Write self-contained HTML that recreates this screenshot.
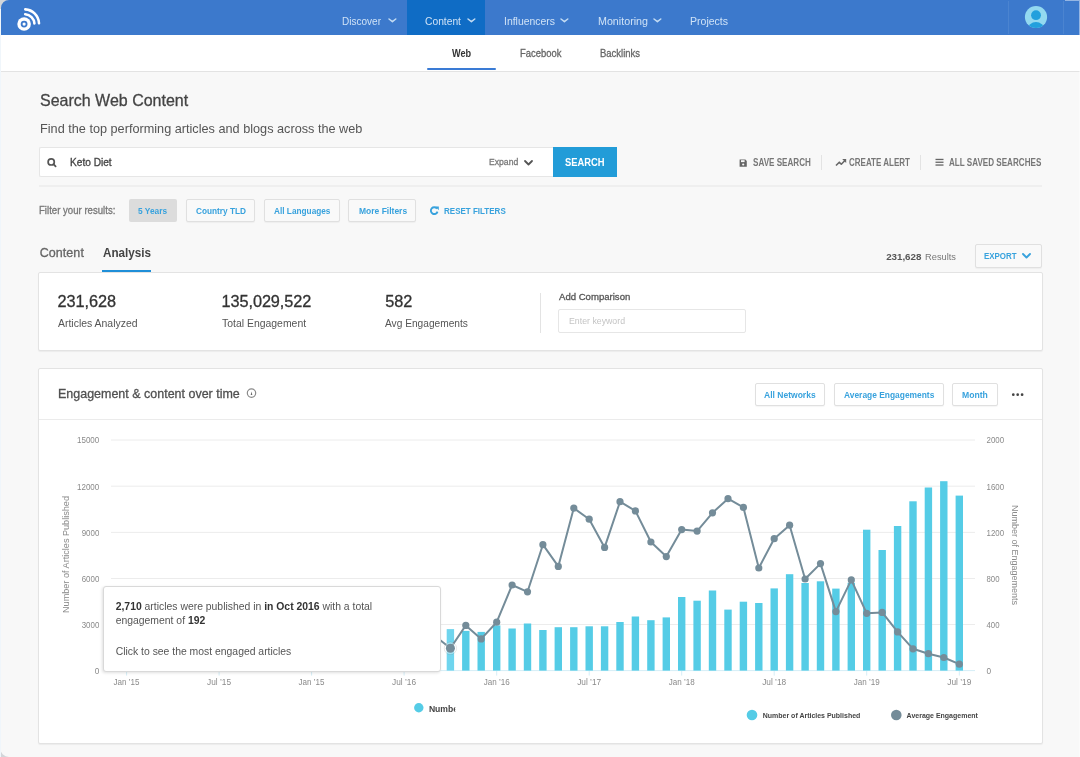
<!DOCTYPE html>
<html><head><meta charset="utf-8"><style>
body{will-change:transform}
html,body{margin:0;padding:0;width:1080px;height:757px;overflow:hidden;background:#f8f8f8;font-family:"Liberation Sans",sans-serif}
.t{position:absolute;line-height:1;white-space:nowrap}
.t b{color:#333}
.b{position:absolute}
.ic{position:absolute;overflow:visible}
.ax{font-family:"Liberation Sans",sans-serif;font-size:8px;fill:#8a8a8a}
.at{font-family:"Liberation Sans",sans-serif;font-size:9px;fill:#8a8a8a}
.lg{font-family:"Liberation Sans",sans-serif;font-weight:bold;fill:#444}
</style></head><body>
<div class="b" style="left:0px;top:0px;width:1080.0px;height:35.0px;background:#3c79cc"></div>
<div class="b" style="left:407px;top:0px;width:78.0px;height:35.0px;background:#0f6cc5"></div>
<div class="t " style="left:342.00px;top:16px;font-size:11px;color:#cfe2f6;transform:scaleX(0.9114);transform-origin:0 0">Discover</div>
<div class="t " style="left:425.00px;top:16px;font-size:11px;color:#cfe2f6;transform:scaleX(0.9337);transform-origin:0 0">Content</div>
<div class="t " style="left:504.00px;top:16px;font-size:11px;color:#cfe2f6;transform:scaleX(0.9481);transform-origin:0 0">Influencers</div>
<div class="t " style="left:597.50px;top:16px;font-size:11px;color:#cfe2f6;transform:scaleX(0.9733);transform-origin:0 0">Monitoring</div>
<div class="t " style="left:690.00px;top:16px;font-size:11px;color:#cfe2f6;transform:scaleX(0.9569);transform-origin:0 0">Projects</div>
<svg class="ic" style="left:387.2px;top:17.2px" width="10.8" height="6.7" viewBox="-2 -2 10.8 6.7"><polyline points="0,0 3.40,2.70 6.80,0" fill="none" stroke="#c3dcf3" stroke-width="1.5" stroke-linecap="round" stroke-linejoin="round"/></svg>
<svg class="ic" style="left:465.7px;top:17.2px" width="10.8" height="6.7" viewBox="-2 -2 10.8 6.7"><polyline points="0,0 3.40,2.70 6.80,0" fill="none" stroke="#c3dcf3" stroke-width="1.5" stroke-linecap="round" stroke-linejoin="round"/></svg>
<svg class="ic" style="left:559.2px;top:17.2px" width="10.8" height="6.7" viewBox="-2 -2 10.8 6.7"><polyline points="0,0 3.40,2.70 6.80,0" fill="none" stroke="#c3dcf3" stroke-width="1.5" stroke-linecap="round" stroke-linejoin="round"/></svg>
<svg class="ic" style="left:652.2px;top:17.2px" width="10.8" height="6.7" viewBox="-2 -2 10.8 6.7"><polyline points="0,0 3.40,2.70 6.80,0" fill="none" stroke="#c3dcf3" stroke-width="1.5" stroke-linecap="round" stroke-linejoin="round"/></svg>
<div class="b" style="left:1008.2px;top:1px;width:1.0px;height:33.0px;background:#4b84d0"></div>
<div class="b" style="left:1062.5px;top:1px;width:1.0px;height:33.0px;background:#4b84d0"></div>
<svg class="ic" style="left:1024px;top:5px" width="24" height="24" viewBox="0 0 24 24"><defs><clipPath id="av"><circle cx="12" cy="12" r="11.1"/></clipPath></defs><circle cx="12" cy="12" r="11.1" fill="#93d9f0"/><g clip-path="url(#av)"><circle cx="12" cy="10.2" r="4.9" fill="#22a0dd"/><ellipse cx="12" cy="24.5" rx="8.2" ry="7.5" fill="#22a0dd"/></g></svg>
<svg class="ic" style="left:10px;top:6px" width="28" height="28" viewBox="10 6 28 28"><circle cx="24.1" cy="24.05" r="6.8" fill="#fff"/><circle cx="24.1" cy="24.05" r="2.5" fill="#fff" stroke="#3c79cc" stroke-width="1.8"/><path d="M25.2 14.2 A9.9 9.9 0 0 1 34.4 23.4" fill="none" stroke="#fff" stroke-width="2.6" stroke-linecap="round"/><path d="M25.3 9.4 A14.6 14.6 0 0 1 39.0 23.2" fill="none" stroke="#fff" stroke-width="2.6" stroke-linecap="round"/></svg>
<div class="b" style="left:0px;top:35px;width:1080.0px;height:36.0px;background:#fff"></div>
<div class="b" style="left:0px;top:71px;width:1080.0px;height:1.0px;background:#e3e3e3"></div>
<div class="t " style="left:451.80px;top:48px;font-size:10.6px;color:#333;font-weight:bold;transform:scaleX(0.8646);transform-origin:0 0">Web</div>
<div class="t " style="left:519.60px;top:48px;font-size:10.6px;color:#666;-webkit-text-stroke:0.3px currentColor;transform:scaleX(0.8894);transform-origin:0 0">Facebook</div>
<div class="t " style="left:599.60px;top:48px;font-size:10.6px;color:#666;-webkit-text-stroke:0.3px currentColor;transform:scaleX(0.8961);transform-origin:0 0">Backlinks</div>
<div class="b" style="left:427px;top:67.5px;width:69.0px;height:2.8px;background:#3a7bd5;border-radius:1px"></div>
<div class="t " style="left:39.80px;top:93px;font-size:16.6px;color:#444;-webkit-text-stroke:0.3px currentColor;transform:scaleX(0.9637);transform-origin:0 0">Search Web Content</div>
<div class="t " style="left:39.80px;top:123px;font-size:12.2px;color:#555;transform:scaleX(1.0412);transform-origin:0 0">Find the top performing articles and blogs across the web</div>
<div class="b" style="left:39px;top:147px;width:514.0px;height:30.0px;background:#fff;border:1px solid #e6e6e6;border-right:none;box-sizing:border-box;border-radius:2px 0 0 2px"></div>
<svg class="ic" style="left:46px;top:156.5px" width="12" height="12" viewBox="0 0 12 12"><circle cx="5.2" cy="4.9" r="3.1" fill="none" stroke="#555" stroke-width="1.7"/><line x1="7.5" y1="7.2" x2="9.6" y2="9.3" stroke="#555" stroke-width="1.8" stroke-linecap="round"/></svg>
<div class="t " style="left:70.00px;top:158px;font-size:10.4px;color:#444;-webkit-text-stroke:0.3px currentColor;transform:scaleX(0.9746);transform-origin:0 0">Keto Diet</div>
<div class="t " style="left:489.40px;top:157px;font-size:9.8px;color:#777;-webkit-text-stroke:0.3px currentColor;transform:scaleX(0.8800);transform-origin:0 0">Expand</div>
<svg class="ic" style="left:522.6px;top:158.6px" width="11.0" height="7.5" viewBox="-2 -2 11.0 7.5"><polyline points="0,0 3.50,3.50 7.00,0" fill="none" stroke="#555" stroke-width="1.8" stroke-linecap="round" stroke-linejoin="round"/></svg>
<div class="b" style="left:552.5px;top:147px;width:64.5px;height:30.0px;background:#229cd8"></div>
<div class="t " style="left:565.00px;top:157px;font-size:10.8px;color:#fff;font-weight:bold;transform:scaleX(0.8679);transform-origin:0 0">SEARCH</div>
<svg class="ic" style="left:739px;top:158.6px" width="8.4" height="8.4" viewBox="0 0 8.4 8.4"><path d="M0.6 0.6 H6.4 L7.8 2 V7.8 H0.6 Z" fill="#666"/><rect x="2" y="1.2" width="3.6" height="1.9" fill="#f8f8f8"/><circle cx="4.2" cy="5.5" r="1.1" fill="#f8f8f8"/></svg>
<div class="t " style="left:753.10px;top:158px;font-size:10.2px;color:#777;font-weight:bold;transform:scaleX(0.7953);transform-origin:0 0">SAVE SEARCH</div>
<div class="b" style="left:821px;top:155px;width:1.0px;height:14.5px;background:#e3e3e3"></div>
<svg class="ic" style="left:834.5px;top:156.7px" width="12" height="10" viewBox="0 0 12 10"><polyline points="1,8.5 4.3,5.2 6.3,7.2 10.2,3.2" fill="none" stroke="#666" stroke-width="1.6" stroke-linejoin="round"/><polygon points="7.2,2 11.2,2 11.2,6" fill="#666"/></svg>
<div class="t " style="left:849.30px;top:158px;font-size:10.2px;color:#777;font-weight:bold;transform:scaleX(0.7859);transform-origin:0 0">CREATE ALERT</div>
<div class="b" style="left:920.3px;top:155px;width:1.0px;height:14.5px;background:#e3e3e3"></div>
<svg class="ic" style="left:934.5px;top:158px" width="9" height="9" viewBox="0 0 9 9"><rect x="0.5" y="0.8" width="8" height="1.3" fill="#666"/><rect x="0.5" y="3.6" width="8" height="1.3" fill="#666"/><rect x="0.5" y="6.4" width="8" height="1.3" fill="#666"/></svg>
<div class="t " style="left:948.50px;top:158px;font-size:10.2px;color:#777;font-weight:bold;transform:scaleX(0.7939);transform-origin:0 0">ALL SAVED SEARCHES</div>
<div class="b" style="left:39px;top:185px;width:1003.0px;height:2.0px;background:#efefef"></div>
<div class="t " style="left:39.30px;top:206px;font-size:10.4px;color:#777;-webkit-text-stroke:0.3px currentColor;transform:scaleX(0.9249);transform-origin:0 0">Filter your results:</div>
<div class="b" style="left:128.6px;top:199px;width:48.5px;height:23.2px;background:#dcdcdc;border-radius:2px"></div>
<div class="t " style="left:138.20px;top:206px;font-size:9.6px;color:#38a2dd;font-weight:bold;transform:scaleX(0.8698);transform-origin:0 0">5 Years</div>
<div class="b" style="left:185.6px;top:198.6px;width:69.5px;height:23.6px;background:#f9f9f9;border:1px solid #e0e0e0;box-sizing:border-box;border-radius:2px;box-shadow:0 1px 1px rgba(0,0,0,0.04)"></div>
<div class="t " style="left:195.60px;top:206px;font-size:9.6px;color:#38a2dd;font-weight:bold;transform:scaleX(0.8602);transform-origin:0 0">Country TLD</div>
<div class="b" style="left:264.1px;top:198.6px;width:76.4px;height:23.6px;background:#f9f9f9;border:1px solid #e0e0e0;box-sizing:border-box;border-radius:2px;box-shadow:0 1px 1px rgba(0,0,0,0.04)"></div>
<div class="t " style="left:273.80px;top:206px;font-size:9.6px;color:#38a2dd;font-weight:bold;transform:scaleX(0.8611);transform-origin:0 0">All Languages</div>
<div class="b" style="left:348.4px;top:198.6px;width:67.9px;height:23.6px;background:#f9f9f9;border:1px solid #e0e0e0;box-sizing:border-box;border-radius:2px;box-shadow:0 1px 1px rgba(0,0,0,0.04)"></div>
<div class="t " style="left:358.50px;top:206px;font-size:9.6px;color:#38a2dd;font-weight:bold;transform:scaleX(0.8855);transform-origin:0 0">More Filters</div>
<svg class="ic" style="left:429px;top:205px" width="11" height="11" viewBox="0 0 11 11"><path d="M8.0 3.6 A3.4 3.4 0 1 0 8.5 6.6" fill="none" stroke="#38a2dd" stroke-width="1.9"/><polygon points="6.2,1.6 9.8,1.6 9.8,5.2" fill="#38a2dd"/></svg>
<div class="t " style="left:444.00px;top:206px;font-size:9.6px;color:#38a2dd;font-weight:bold;transform:scaleX(0.8355);transform-origin:0 0">RESET FILTERS</div>
<div class="t " style="left:39.70px;top:247px;font-size:12.5px;color:#666;-webkit-text-stroke:0.3px currentColor;letter-spacing:0.065px">Content</div>
<div class="t " style="left:102.60px;top:247px;font-size:12.5px;color:#444;font-weight:bold;transform:scaleX(0.9332);transform-origin:0 0">Analysis</div>
<div class="b" style="left:102px;top:270.3px;width:49.0px;height:3.0px;background:#1f8fd8"></div>
<div class="t " style="left:886.20px;top:252px;font-size:9.8px;color:#555;font-weight:bold;letter-spacing:-0.038px">231,628</div>
<div class="t " style="left:924.90px;top:252px;font-size:9.8px;color:#777;transform:scaleX(0.9485);transform-origin:0 0">Results</div>
<div class="b" style="left:974.8px;top:243.8px;width:66.9px;height:23.8px;background:#f9f9f9;border:1px solid #e0e0e0;box-sizing:border-box;border-radius:2px;box-shadow:0 1px 1px rgba(0,0,0,0.04)"></div>
<div class="t " style="left:984.40px;top:251px;font-size:9.6px;color:#38a2dd;font-weight:bold;transform:scaleX(0.8262);transform-origin:0 0">EXPORT</div>
<svg class="ic" style="left:1021.3px;top:252.2px" width="11.0" height="7.5" viewBox="-2 -2 11.0 7.5"><polyline points="0,0 3.50,3.50 7.00,0" fill="none" stroke="#38a2dd" stroke-width="1.9" stroke-linecap="round" stroke-linejoin="round"/></svg>
<div class="b" style="left:38px;top:272px;width:1005.0px;height:79.0px;background:#fff;border:1px solid #e3e3e3;box-sizing:border-box;border-radius:2px;box-shadow:0 1px 1px rgba(0,0,0,0.05)"></div>
<div class="t " style="left:57.60px;top:293px;font-size:16.3px;color:#333;-webkit-text-stroke:0.3px currentColor;letter-spacing:-0.054px">231,628</div>
<div class="t " style="left:57.60px;top:318px;font-size:11.2px;color:#555;transform:scaleX(0.9333);transform-origin:0 0">Articles Analyzed</div>
<div class="t " style="left:221.50px;top:293px;font-size:16.3px;color:#333;-webkit-text-stroke:0.3px currentColor;letter-spacing:-0.073px">135,029,522</div>
<div class="t " style="left:221.50px;top:318px;font-size:11.2px;color:#555;transform:scaleX(0.9327);transform-origin:0 0">Total Engagement</div>
<div class="t " style="left:385.20px;top:293px;font-size:16.3px;color:#333;-webkit-text-stroke:0.3px currentColor;letter-spacing:-0.061px">582</div>
<div class="t " style="left:385.20px;top:318px;font-size:11.2px;color:#555;transform:scaleX(0.9087);transform-origin:0 0">Avg Engagements</div>
<div class="b" style="left:540px;top:292.6px;width:1.0px;height:40.8px;background:#e3e3e3"></div>
<div class="t " style="left:558.80px;top:292px;font-size:9.9px;color:#555;-webkit-text-stroke:0.3px currentColor;transform:scaleX(0.9695);transform-origin:0 0">Add Comparison</div>
<div class="b" style="left:558px;top:309px;width:188.0px;height:24.0px;background:#fff;border:1px solid #e6e6e6;box-sizing:border-box;border-radius:2px"></div>
<div class="t " style="left:568.60px;top:317px;font-size:9px;color:#c4c4c4;transform:scaleX(0.9737);transform-origin:0 0">Enter keyword</div>
<div class="b" style="left:38px;top:368px;width:1005.0px;height:376.0px;background:#fff;border:1px solid #e3e3e3;box-sizing:border-box;border-radius:2px;box-shadow:0 1px 1px rgba(0,0,0,0.05)"></div>
<div class="b" style="left:39px;top:419px;width:1003.0px;height:1.0px;background:#ebebeb"></div>
<div class="t " style="left:57.80px;top:388px;font-size:12.9px;color:#505050;-webkit-text-stroke:0.3px currentColor;transform:scaleX(0.9682);transform-origin:0 0">Engagement &amp; content over time</div>
<svg class="ic" style="left:246px;top:388px" width="11" height="11" viewBox="246 388 11 11"><circle cx="251.5" cy="393.1" r="4.2" fill="none" stroke="#8a8a8a" stroke-width="1.2"/><path d="M251.5 391.6 L252.3 394.9 L250.7 394.9 Z" fill="#666"/></svg>
<div class="b" style="left:755.2px;top:383px;width:70.3px;height:23.2px;background:#fff;border:1px solid #e0e0e0;box-sizing:border-box;border-radius:2px;box-shadow:0 1px 1px rgba(0,0,0,0.04)"></div>
<div class="t " style="left:764.40px;top:390px;font-size:9.6px;color:#38a2dd;font-weight:bold;transform:scaleX(0.8894);transform-origin:0 0">All Networks</div>
<div class="b" style="left:834.1px;top:383px;width:110.3px;height:23.2px;background:#fff;border:1px solid #e0e0e0;box-sizing:border-box;border-radius:2px;box-shadow:0 1px 1px rgba(0,0,0,0.04)"></div>
<div class="t " style="left:843.90px;top:390px;font-size:9.6px;color:#38a2dd;font-weight:bold;transform:scaleX(0.8764);transform-origin:0 0">Average Engagements</div>
<div class="b" style="left:952.4px;top:383px;width:45.9px;height:23.2px;background:#fff;border:1px solid #e0e0e0;box-sizing:border-box;border-radius:2px;box-shadow:0 1px 1px rgba(0,0,0,0.04)"></div>
<div class="t " style="left:962.40px;top:390px;font-size:9.6px;color:#38a2dd;font-weight:bold;transform:scaleX(0.8993);transform-origin:0 0">Month</div>
<svg class="ic" style="left:1008px;top:389px" width="20" height="12" viewBox="1008 389 20 12"><circle cx="1013.3" cy="394.7" r="1.35" fill="#444"/><circle cx="1017.7" cy="394.7" r="1.35" fill="#444"/><circle cx="1022.1" cy="394.7" r="1.35" fill="#444"/></svg>
<svg class="ic" style="left:0;top:0" width="1080" height="757" viewBox="0 0 1080 757"><line x1="111" y1="440" x2="975" y2="440" stroke="#ececec" stroke-width="1"/>
<line x1="111" y1="486.2" x2="975" y2="486.2" stroke="#ececec" stroke-width="1"/>
<line x1="111" y1="532.4" x2="975" y2="532.4" stroke="#ececec" stroke-width="1"/>
<line x1="111" y1="578.5" x2="975" y2="578.5" stroke="#ececec" stroke-width="1"/>
<line x1="111" y1="624.5" x2="975" y2="624.5" stroke="#ececec" stroke-width="1"/>
<line x1="111" y1="670.6" x2="975" y2="670.6" stroke="#d6eef7" stroke-width="1"/>
<line x1="126.6" y1="670.6" x2="126.6" y2="675.6" stroke="#d6eef7" stroke-width="1"/>
<text x="126.6" y="684.8" text-anchor="middle" class="ax" style="font-size:9px" textLength="25.99" lengthAdjust="spacingAndGlyphs" >Jan &#8217;15</text>
<line x1="219.1" y1="670.6" x2="219.1" y2="675.6" stroke="#d6eef7" stroke-width="1"/>
<text x="219.1" y="684.8" text-anchor="middle" class="ax" style="font-size:9px" textLength="24.00" lengthAdjust="spacingAndGlyphs" >Jul &#8217;15</text>
<line x1="311.6" y1="670.6" x2="311.6" y2="675.6" stroke="#d6eef7" stroke-width="1"/>
<text x="311.6" y="684.8" text-anchor="middle" class="ax" style="font-size:9px" textLength="25.99" lengthAdjust="spacingAndGlyphs" >Jan &#8217;15</text>
<line x1="404.1" y1="670.6" x2="404.1" y2="675.6" stroke="#d6eef7" stroke-width="1"/>
<text x="404.1" y="684.8" text-anchor="middle" class="ax" style="font-size:9px" textLength="24.00" lengthAdjust="spacingAndGlyphs" >Jul &#8217;16</text>
<line x1="496.7" y1="670.6" x2="496.7" y2="675.6" stroke="#d6eef7" stroke-width="1"/>
<text x="496.7" y="684.8" text-anchor="middle" class="ax" style="font-size:9px" textLength="25.99" lengthAdjust="spacingAndGlyphs" >Jan &#8217;16</text>
<line x1="589.2" y1="670.6" x2="589.2" y2="675.6" stroke="#d6eef7" stroke-width="1"/>
<text x="589.2" y="684.8" text-anchor="middle" class="ax" style="font-size:9px" textLength="24.00" lengthAdjust="spacingAndGlyphs" >Jul &#8217;17</text>
<line x1="681.7" y1="670.6" x2="681.7" y2="675.6" stroke="#d6eef7" stroke-width="1"/>
<text x="681.7" y="684.8" text-anchor="middle" class="ax" style="font-size:9px" textLength="25.99" lengthAdjust="spacingAndGlyphs" >Jan &#8217;18</text>
<line x1="774.2" y1="670.6" x2="774.2" y2="675.6" stroke="#d6eef7" stroke-width="1"/>
<text x="774.2" y="684.8" text-anchor="middle" class="ax" style="font-size:9px" textLength="24.00" lengthAdjust="spacingAndGlyphs" >Jul &#8217;18</text>
<line x1="866.7" y1="670.6" x2="866.7" y2="675.6" stroke="#d6eef7" stroke-width="1"/>
<text x="866.7" y="684.8" text-anchor="middle" class="ax" style="font-size:9px" textLength="25.99" lengthAdjust="spacingAndGlyphs" >Jan &#8217;19</text>
<line x1="959.3" y1="670.6" x2="959.3" y2="675.6" stroke="#d6eef7" stroke-width="1"/>
<text x="959.3" y="684.8" text-anchor="middle" class="ax" style="font-size:9px" textLength="24.00" lengthAdjust="spacingAndGlyphs" >Jul &#8217;19</text>
<text x="99.3" y="443.3" text-anchor="end" class="ax" style="font-size:9px" textLength="22.31" lengthAdjust="spacingAndGlyphs" >15000</text>
<text x="986.5" y="443.3" text-anchor="start" class="ax" style="font-size:9px" textLength="17.60" lengthAdjust="spacingAndGlyphs" >2000</text>
<text x="99.3" y="489.5" text-anchor="end" class="ax" style="font-size:9px" textLength="22.31" lengthAdjust="spacingAndGlyphs" >12000</text>
<text x="986.5" y="489.5" text-anchor="start" class="ax" style="font-size:9px" textLength="17.60" lengthAdjust="spacingAndGlyphs" >1600</text>
<text x="99.3" y="535.7" text-anchor="end" class="ax" style="font-size:9px" textLength="17.60" lengthAdjust="spacingAndGlyphs" >9000</text>
<text x="986.5" y="535.7" text-anchor="start" class="ax" style="font-size:9px" textLength="17.60" lengthAdjust="spacingAndGlyphs" >1200</text>
<text x="99.3" y="581.8" text-anchor="end" class="ax" style="font-size:9px" textLength="17.60" lengthAdjust="spacingAndGlyphs" >6000</text>
<text x="986.5" y="581.8" text-anchor="start" class="ax" style="font-size:9px" textLength="12.99" lengthAdjust="spacingAndGlyphs" >800</text>
<text x="99.3" y="627.8" text-anchor="end" class="ax" style="font-size:9px" textLength="17.60" lengthAdjust="spacingAndGlyphs" >3000</text>
<text x="986.5" y="627.8" text-anchor="start" class="ax" style="font-size:9px" textLength="12.99" lengthAdjust="spacingAndGlyphs" >400</text>
<text x="99.3" y="673.9" text-anchor="end" class="ax" style="font-size:9px" textLength="4.61" lengthAdjust="spacingAndGlyphs" >0</text>
<text x="986.5" y="673.9" text-anchor="start" class="ax" style="font-size:9px" textLength="4.61" lengthAdjust="spacingAndGlyphs" >0</text>
<g transform="translate(69.3,554.5) rotate(-90)"><text x="0.0" y="0.0" text-anchor="middle" class="at" style="font-size:9.6px" textLength="117.00" lengthAdjust="spacingAndGlyphs" >Number of Articles Published</text></g>
<g transform="translate(1011.5,555) rotate(90)"><text x="0.0" y="0.0" text-anchor="middle" class="at" style="font-size:9.6px" textLength="99.98" lengthAdjust="spacingAndGlyphs" >Number of Engagements</text></g>
<rect x="446.7" y="629.1" width="7.4" height="41.5" fill="#6fd5ee"/>
<rect x="462.1" y="630.9" width="7.4" height="39.7" fill="#55cce6"/>
<rect x="477.5" y="631.9" width="7.4" height="38.7" fill="#55cce6"/>
<rect x="493.0" y="625.4" width="7.4" height="45.2" fill="#55cce6"/>
<rect x="508.4" y="628.5" width="7.4" height="42.1" fill="#55cce6"/>
<rect x="523.8" y="623.5" width="7.4" height="47.1" fill="#55cce6"/>
<rect x="539.2" y="630" width="7.4" height="40.6" fill="#55cce6"/>
<rect x="554.6" y="627.2" width="7.4" height="43.4" fill="#55cce6"/>
<rect x="570.1" y="627.2" width="7.4" height="43.4" fill="#55cce6"/>
<rect x="585.5" y="626.3" width="7.4" height="44.3" fill="#55cce6"/>
<rect x="600.9" y="626.3" width="7.4" height="44.3" fill="#55cce6"/>
<rect x="616.3" y="622" width="7.4" height="48.6" fill="#55cce6"/>
<rect x="631.7" y="616.5" width="7.4" height="54.1" fill="#55cce6"/>
<rect x="647.2" y="620.2" width="7.4" height="50.4" fill="#55cce6"/>
<rect x="662.6" y="617.4" width="7.4" height="53.2" fill="#55cce6"/>
<rect x="678.0" y="597" width="7.4" height="73.6" fill="#55cce6"/>
<rect x="693.4" y="600.7" width="7.4" height="69.9" fill="#55cce6"/>
<rect x="708.8" y="590.5" width="7.4" height="80.1" fill="#55cce6"/>
<rect x="724.3" y="609.6" width="7.4" height="61.0" fill="#55cce6"/>
<rect x="739.7" y="601.7" width="7.4" height="68.9" fill="#55cce6"/>
<rect x="755.1" y="603" width="7.4" height="67.6" fill="#55cce6"/>
<rect x="770.5" y="588.4" width="7.4" height="82.2" fill="#55cce6"/>
<rect x="785.9" y="574.2" width="7.4" height="96.4" fill="#55cce6"/>
<rect x="801.4" y="583" width="7.4" height="87.6" fill="#55cce6"/>
<rect x="816.8" y="581.3" width="7.4" height="89.3" fill="#55cce6"/>
<rect x="832.2" y="588.6" width="7.4" height="82.0" fill="#55cce6"/>
<rect x="847.6" y="582.8" width="7.4" height="87.8" fill="#55cce6"/>
<rect x="863.0" y="529.7" width="7.4" height="140.9" fill="#55cce6"/>
<rect x="878.5" y="550" width="7.4" height="120.6" fill="#55cce6"/>
<rect x="893.9" y="526" width="7.4" height="144.6" fill="#55cce6"/>
<rect x="909.3" y="501.3" width="7.4" height="169.3" fill="#55cce6"/>
<rect x="924.7" y="487.5" width="7.4" height="183.1" fill="#55cce6"/>
<rect x="940.1" y="481.2" width="7.4" height="189.4" fill="#55cce6"/>
<rect x="955.6" y="495.6" width="7.4" height="175.0" fill="#55cce6"/>
<polyline points="435.0,636 450.4,648.3 465.8,625.4 481.2,638.9 496.7,622.2 512.1,585 527.5,591.8 542.9,544.7 558.3,566.4 573.8,508.1 589.2,519.2 604.6,547.4 620.0,501.7 635.4,510.9 650.9,542 666.3,556.6 681.7,529.6 697.1,531.1 712.5,512.8 728.0,498.7 743.4,507.4 758.8,568 774.2,538.7 789.6,525.2 805.1,579 820.5,563.6 835.9,611.6 851.3,579.9 866.7,613.3 882.2,612.4 897.6,631.9 913.0,648.8 928.4,653.7 943.8,657.5 959.3,664.2" fill="none" stroke="#748c99" stroke-width="2" stroke-linejoin="round"/>
<circle cx="450.4" cy="648.3" r="6.2" fill="rgba(255,255,255,0.35)" stroke="rgba(0,0,0,0.09)" stroke-width="1"/>
<circle cx="450.4" cy="648.3" r="4.5" fill="#748c99"/>
<circle cx="465.8" cy="625.4" r="3.6" fill="#748c99"/>
<circle cx="481.2" cy="638.9" r="3.6" fill="#748c99"/>
<circle cx="496.7" cy="622.2" r="3.6" fill="#748c99"/>
<circle cx="512.1" cy="585" r="3.6" fill="#748c99"/>
<circle cx="527.5" cy="591.8" r="3.6" fill="#748c99"/>
<circle cx="542.9" cy="544.7" r="3.6" fill="#748c99"/>
<circle cx="558.3" cy="566.4" r="3.6" fill="#748c99"/>
<circle cx="573.8" cy="508.1" r="3.6" fill="#748c99"/>
<circle cx="589.2" cy="519.2" r="3.6" fill="#748c99"/>
<circle cx="604.6" cy="547.4" r="3.6" fill="#748c99"/>
<circle cx="620.0" cy="501.7" r="3.6" fill="#748c99"/>
<circle cx="635.4" cy="510.9" r="3.6" fill="#748c99"/>
<circle cx="650.9" cy="542" r="3.6" fill="#748c99"/>
<circle cx="666.3" cy="556.6" r="3.6" fill="#748c99"/>
<circle cx="681.7" cy="529.6" r="3.6" fill="#748c99"/>
<circle cx="697.1" cy="531.1" r="3.6" fill="#748c99"/>
<circle cx="712.5" cy="512.8" r="3.6" fill="#748c99"/>
<circle cx="728.0" cy="498.7" r="3.6" fill="#748c99"/>
<circle cx="743.4" cy="507.4" r="3.6" fill="#748c99"/>
<circle cx="758.8" cy="568" r="3.6" fill="#748c99"/>
<circle cx="774.2" cy="538.7" r="3.6" fill="#748c99"/>
<circle cx="789.6" cy="525.2" r="3.6" fill="#748c99"/>
<circle cx="805.1" cy="579" r="3.6" fill="#748c99"/>
<circle cx="820.5" cy="563.6" r="3.6" fill="#748c99"/>
<circle cx="835.9" cy="611.6" r="3.6" fill="#748c99"/>
<circle cx="851.3" cy="579.9" r="3.6" fill="#748c99"/>
<circle cx="866.7" cy="613.3" r="3.6" fill="#748c99"/>
<circle cx="882.2" cy="612.4" r="3.6" fill="#748c99"/>
<circle cx="897.6" cy="631.9" r="3.6" fill="#748c99"/>
<circle cx="913.0" cy="648.8" r="3.6" fill="#748c99"/>
<circle cx="928.4" cy="653.7" r="3.6" fill="#748c99"/>
<circle cx="943.8" cy="657.5" r="3.6" fill="#748c99"/>
<circle cx="959.3" cy="664.2" r="3.6" fill="#748c99"/>
<circle cx="418.8" cy="707.7" r="4.7" fill="#55cce6"/>
<svg x="428" y="698" width="27.3" height="20"><text x="0.9" y="13.7" class="lg" style="font-size:8.6px">Number of Articles Published</text></svg>
<circle cx="752" cy="715" r="5.3" fill="#55cce6"/>
<text x="762.8" y="717.8" class="lg" style="font-size:8px" textLength="97.50" lengthAdjust="spacingAndGlyphs">Number of Articles Published</text>
<circle cx="896.3" cy="715" r="5.3" fill="#748c99"/>
<text x="906.6" y="717.8" class="lg" style="font-size:8px" textLength="71.29" lengthAdjust="spacingAndGlyphs">Average Engagement</text></svg>
<div class="b" style="left:103px;top:586px;width:338.0px;height:86.0px;background:#fff;border:1px solid #d9d9d9;box-sizing:border-box;border-radius:3px;box-shadow:-1px 1px 3px rgba(0,0,0,0.12)"></div>
<div class="t " style="left:115.70px;top:602px;font-size:10.4px;color:#555"><b>2,710</b> articles were published in <b>in Oct 2016</b> with a total</div>
<div class="t " style="left:115.70px;top:616px;font-size:10.4px;color:#555">engagement of <b>192</b></div>
<div class="t " style="left:115.70px;top:647px;font-size:10.4px;color:#555">Click to see the most engaged articles</div>
<svg class="ic" style="left:0;top:0" width="1080" height="757" viewBox="0 0 1080 757"><path d="M0 0 H9 A8 8 0 0 0 1 8 V9 H0 Z" fill="#d3d6da"/><path d="M0 748 A9 9 0 0 0 9 757 H0 Z" fill="#d3d6da"/><rect x="0" y="9" width="1" height="748" fill="#f0f6fb"/><rect x="1079" y="0" width="1" height="757" fill="rgba(255,255,255,0.45)"/><rect x="1065" y="0" width="14" height="1" fill="rgba(255,255,255,0.45)"/></svg>
</body></html>
